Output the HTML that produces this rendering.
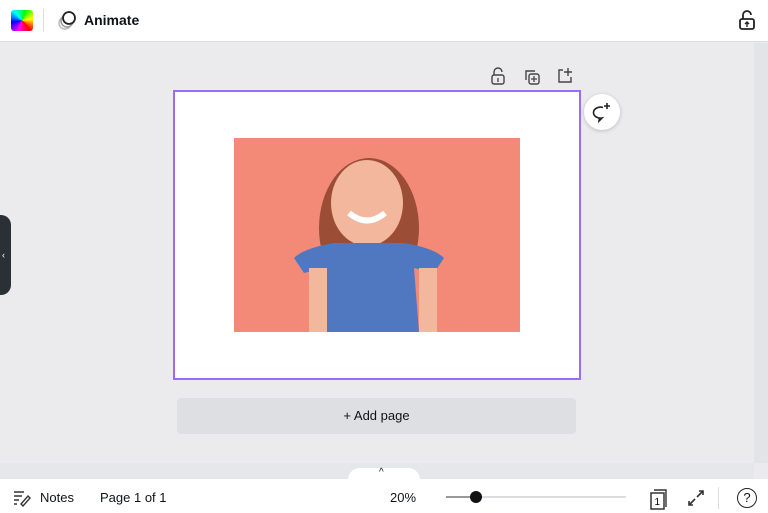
<!DOCTYPE html>
<html><head><style>
*{margin:0;padding:0;box-sizing:border-box}
body{width:768px;height:513px;overflow:hidden;background:#ebebee;font-family:"Liberation Sans",sans-serif;position:relative;color:#0e1318}
.abs{position:absolute}
</style></head><body>
<div class="abs" style="left:0;top:0;width:768px;height:42px;background:#fff;border-bottom:1px solid #dcdde1"></div>
<div class="abs" style="left:11px;top:10px;width:22px;height:21px;border-radius:3px;background:conic-gradient(from 200deg,#f0f,#00f,#0ff,#0f0,#ff0,#f00,#f0f)"></div>
<div class="abs" style="left:43px;top:9px;width:1px;height:23px;background:#dcdde1"></div>
<svg class="abs" style="left:56px;top:9px" width="22" height="22"><circle cx="9" cy="14" r="6" fill="none" stroke="#bbb" stroke-width="1.5"/><circle cx="11" cy="12" r="6" fill="#fff" stroke="#999" stroke-width="1.5"/><circle cx="13" cy="9" r="6" fill="#fff" stroke="#222" stroke-width="1.8"/></svg>
<div class="abs" style="left:84px;top:12px;font-size:14px;font-weight:bold">Animate</div>
<svg class="abs" style="left:737px;top:9px" width="20" height="22"><path d="M6 10V6a4 4 0 0 1 8 0" fill="none" stroke="#222" stroke-width="1.8"/><rect x="3" y="10" width="14" height="10" rx="2" fill="none" stroke="#222" stroke-width="1.8"/><path d="M10 18v-5M8 15l2-2 2 2" stroke="#222" fill="none" stroke-width="1.4"/></svg>
<div class="abs" style="left:754px;top:43px;width:14px;height:420px;background:#e3e4e8"></div>
<div class="abs" style="left:0;top:463px;width:754px;height:16px;background:#e6e7ea"></div>
<div class="abs" style="left:0;top:479px;width:768px;height:34px;background:#fff"></div>
<div class="abs" style="left:348px;top:468px;width:72px;height:14px;background:#fff;border-radius:12px 12px 0 0"></div>
<div class="abs" style="left:379px;top:467px;font-size:10px">^</div>
<div class="abs" style="left:-8px;top:215px;width:19px;height:80px;background:#2b2f36;border-radius:0 10px 10px 0"></div>
<div class="abs" style="left:2px;top:250px;font-size:9px;color:#fff">‹</div>
<svg class="abs" style="left:489px;top:67px" width="18" height="18"><path d="M5 8V5a4 4 0 0 1 8 0" fill="none" stroke="#444" stroke-width="1.4"/><rect x="3" y="8" width="12" height="9" rx="2" fill="none" stroke="#444" stroke-width="1.4"/><path d="M9 15v-4" stroke="#444" stroke-width="1.3"/></svg>
<svg class="abs" style="left:523px;top:68px" width="18" height="18"><path d="M3 12V3h9" fill="none" stroke="#444" stroke-width="1.4"/><rect x="6" y="6" width="10" height="10" rx="2" fill="none" stroke="#444" stroke-width="1.4"/><path d="M11 8v6M8 11h6" stroke="#444" stroke-width="1.3"/></svg>
<svg class="abs" style="left:555px;top:66px" width="18" height="18"><path d="M8 4H4v12h12v-5" fill="none" stroke="#444" stroke-width="1.4"/><path d="M13 2v8M9 6h8" stroke="#444" stroke-width="1.4"/></svg>
<div class="abs" style="left:173px;top:90px;width:408px;height:290px;background:#fff;border:2px solid #9b6cf7"></div>
<div class="abs" style="left:234px;top:138px;width:286px;height:194px;background:#f38a78;overflow:hidden">
<svg width="286" height="194"><ellipse cx="135" cy="90" rx="50" ry="70" fill="#9c4d35"/><ellipse cx="133" cy="65" rx="36" ry="43" fill="#f2b79c"/><path d="M115 75q18 15 36 0" stroke="#fff" stroke-width="6" fill="none"/><rect x="125" y="100" width="20" height="20" fill="#f2b79c"/><path d="M60 120q10-10 40-15h70q30 5 40 15l-10 15-20-5 5 64h-100l5-64-20 5z" fill="#4f78c0"/><rect x="75" y="130" width="18" height="64" fill="#f2b79c"/><rect x="185" y="130" width="18" height="64" fill="#f2b79c"/></svg></div>
<div class="abs" style="left:584px;top:94px;width:36px;height:36px;border-radius:50%;background:#fff;box-shadow:0 1px 4px rgba(0,0,0,.2)"></div>
<svg class="abs" style="left:590px;top:100px" width="24" height="24"><path d="M13 7.5a7 5.5 0 1 0 -1 10.5l-3 3 0.5-3" fill="none" stroke="#222" stroke-width="1.6"/><path d="M17 3v6M14 6h6" stroke="#222" stroke-width="1.6"/></svg>
<div class="abs" style="left:177px;top:398px;width:399px;height:36px;background:#dedfe3;border-radius:4px;text-align:center;line-height:36px;font-size:13px">+ Add page</div>
<svg class="abs" style="left:12px;top:489px" width="20" height="18"><path d="M2 3h10M2 7h8M2 11h5M2 15h3" stroke="#333" stroke-width="1.5"/><path d="M9 15l7-8 2 2-7 8z" fill="none" stroke="#333" stroke-width="1.4"/></svg>
<div class="abs" style="left:40px;top:490px;font-size:13px">Notes</div>
<div class="abs" style="left:100px;top:490px;font-size:13px">Page 1 of 1</div>
<div class="abs" style="left:390px;top:490px;font-size:13px">20%</div>
<div class="abs" style="left:446px;top:496px;width:180px;height:2px;background:#dcdde1"></div>
<div class="abs" style="left:446px;top:496px;width:30px;height:2px;background:#999"></div>
<div class="abs" style="left:470px;top:491px;width:12px;height:12px;border-radius:50%;background:#111"></div>
<svg class="abs" style="left:648px;top:487px" width="22" height="24"><path d="M6 3h12v17" fill="none" stroke="#333" stroke-width="1.4"/><rect x="3" y="6" width="13" height="16" fill="none" stroke="#333" stroke-width="1.5"/><text x="6.5" y="18" font-size="10" font-family="Liberation Sans">1</text></svg>
<svg class="abs" style="left:687px;top:489px" width="18" height="18"><path d="M10 8l6-6M12 2h4v4M8 10l-6 6M2 12v4h4" fill="none" stroke="#333" stroke-width="1.6"/></svg>
<div class="abs" style="left:718px;top:487px;width:1px;height:22px;background:#dcdde1"></div>
<div class="abs" style="left:737px;top:488px;width:20px;height:20px;border:1.6px solid #222;border-radius:50%;text-align:center;font-size:13px;line-height:17px">?</div>
</body></html>
